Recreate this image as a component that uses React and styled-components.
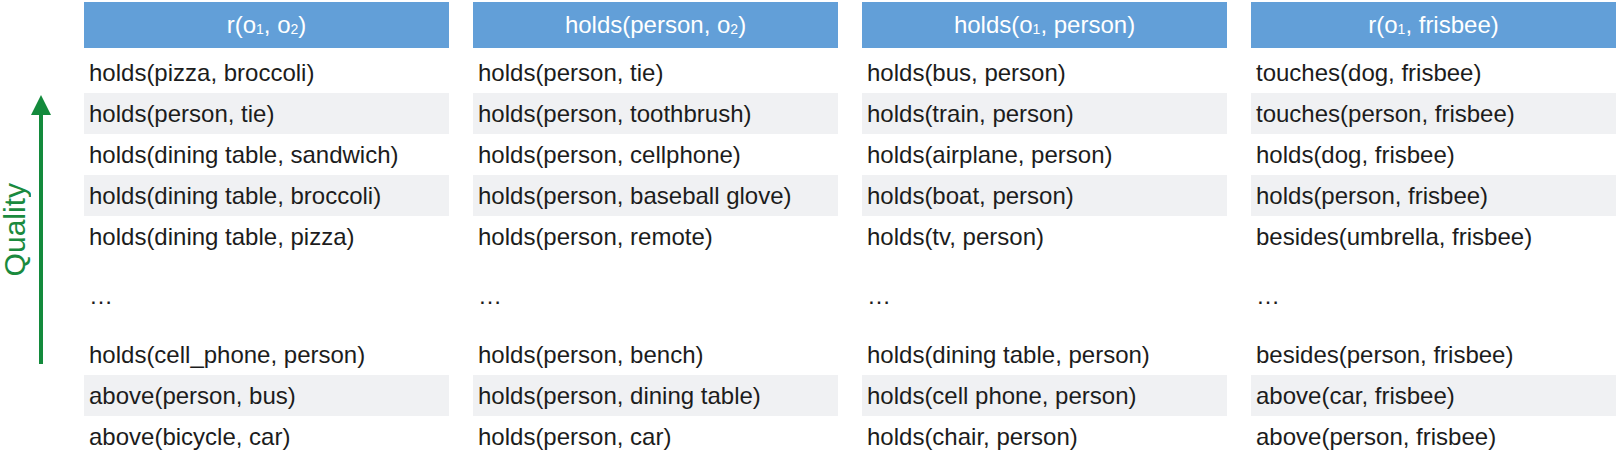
import React from 'react'
import styled, { createGlobalStyle } from 'styled-components';

const GlobalStyle = createGlobalStyle`
body {
  margin: 0;
  background: #FFFFFF;
  font-family: 'Liberation Sans', Arial, sans-serif;
  overflow: hidden;
}
`

const Page = styled.div`
display: flex;
width: 1616px;
height: 451px;
padding-top: 2px;
box-sizing: border-box;
`
const Side = styled.div`
width: 84px;
height: 455px;
flex-shrink: 0;
display: flex;
align-items: center;
gap: 1px;
`
const QualityLabel = styled.span`
writing-mode: vertical-rl;
transform: rotate(180deg);
font-size: 30px;
line-height: 30px;
color: #1A8A3E;
`
const Table = styled.div`
flex: 1;
display: grid;
grid-template-columns: repeat(4, 1fr);
column-gap: 24px;
align-items: start;
`
const Column = styled.div`
display: flex;
flex-direction: column;
`
const Header = styled.div`
height: 46px;
margin-bottom: 4px;
background: #629FD8;
color: #FFFFFF;
font-size: 24px;
line-height: 46px;
text-align: center;
white-space: pre;

sub {
  font-size: 14px;
  position: relative;
  top: 1px;
  vertical-align: baseline;
  line-height: 0;
}
`
const Row = styled.div`
height: ${p => (p.$tall ? '77px' : '41px')};
line-height: ${p => (p.$tall ? '77px' : '41px')};
padding: 0 0 2px 5px;
box-sizing: border-box;
background: ${p => (p.$shaded ? '#F0F1F3' : '#FFFFFF')};
color: #1C1C1C;
font-size: 24px;
white-space: nowrap;
`

const O = ({ n }) => <>o<sub>{n}</sub></>

const columns = [
  {
    title: <>r(<O n="1" />, <O n="2" />)</>,
    items: ['holds(pizza, broccoli)', 'holds(person, tie)', 'holds(dining table, sandwich)', 'holds(dining table, broccoli)', 'holds(dining table, pizza)', '…', 'holds(cell_phone, person)', 'above(person, bus)', 'above(bicycle, car)'],
  },
  {
    title: <>holds(person, <O n="2" />)</>,
    items: ['holds(person, tie)', 'holds(person, toothbrush)', 'holds(person, cellphone)', 'holds(person, baseball glove)', 'holds(person, remote)', '…', 'holds(person, bench)', 'holds(person, dining table)', 'holds(person, car)'],
  },
  {
    title: <>holds(<O n="1" />, person)</>,
    items: ['holds(bus, person)', 'holds(train, person)', 'holds(airplane, person)', 'holds(boat, person)', 'holds(tv, person)', '…', 'holds(dining table, person)', 'holds(cell phone, person)', 'holds(chair, person)'],
  },
  {
    title: <>r(<O n="1" />, frisbee)</>,
    items: ['touches(dog, frisbee)', 'touches(person, frisbee)', 'holds(dog, frisbee)', 'holds(person, frisbee)', 'besides(umbrella, frisbee)', '…', 'besides(person, frisbee)', 'above(car, frisbee)', 'above(person, frisbee)'],
  },
]

const shaded = [1, 3, 7]

const Arrow = () => (
  <svg width="20" height="269" viewBox="0 0 20 269">
    <polygon points="10,0 20,20 0,20" fill="#138A3C" />
    <rect x="8" y="18" width="4" height="251" fill="#138A3C" />
  </svg>
)

const App = () => {
  return (
    <Page>
      <GlobalStyle />
      <Side>
        <QualityLabel>Quality</QualityLabel>
        <Arrow />
      </Side>
      <Table>
        {columns.map((col, i) => (
          <Column key={i}>
            <Header>{col.title}</Header>
            {col.items.map((item, j) => (
              <Row key={j} $shaded={shaded.includes(j)} $tall={j === 5}>
                {item}
              </Row>
            ))}
          </Column>
        ))}
      </Table>
    </Page>
  )
}

export default App
